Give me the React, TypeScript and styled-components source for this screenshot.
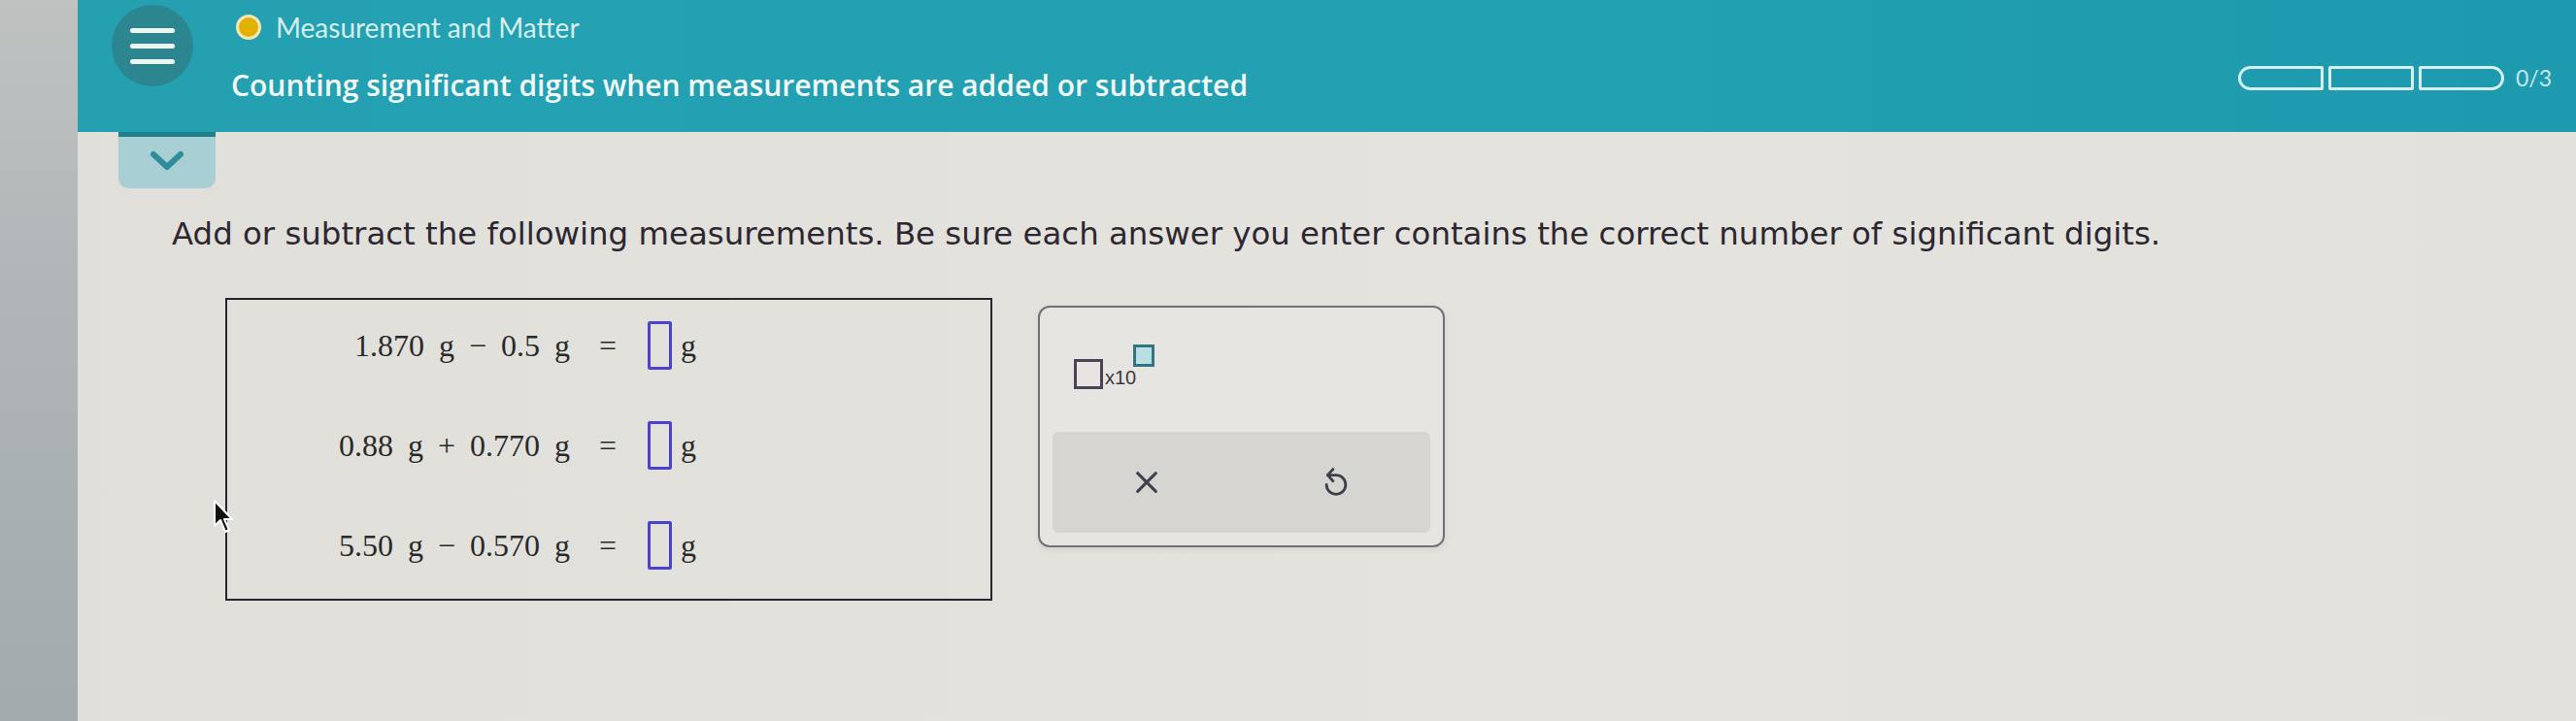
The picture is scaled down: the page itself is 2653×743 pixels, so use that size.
import React from "react";
import styled, { createGlobalStyle } from "styled-components";

const GlobalStyle = createGlobalStyle`
  html, body {
    margin: 0;
    padding: 0;
    background: #e2e1dc;
  }
  * { box-sizing: border-box; }
`;

const equations = [
  { expr: "1.870 g − 0.5 g" },
  { expr: "0.88 g + 0.770 g" },
  { expr: "5.50 g − 0.570 g" },
];

const App: React.FC = () => {
  return (
    <Page>
      <GlobalStyle />
      <LeftStrip />
      <Main>
        <Header>
          <MenuButton>
            <span />
            <span />
            <span />
          </MenuButton>
          <Titles>
            <Topic>
              <Dot />
              <span>Measurement and Matter</span>
            </Topic>
            <Lesson>Counting significant digits when measurements are added or subtracted</Lesson>
          </Titles>
          <Progress>
            <Segment $pos="first" />
            <Segment $pos="mid" />
            <Segment $pos="last" />
            <Score>0/3</Score>
          </Progress>
        </Header>

        <Tab>
          <svg width="36" height="22" viewBox="0 0 36 22">
            <polyline points="4,4 18,17 32,4" fill="none" stroke="#2f8d99" strokeWidth="6" strokeLinecap="round" strokeLinejoin="round" />
          </svg>
        </Tab>

        <Instruction>
          Add or subtract the following measurements. Be sure each answer you enter contains the correct number of significant digits.
        </Instruction>

        <Workspace>
          <EquationBox>
            {equations.map((e) => (
              <React.Fragment key={e.expr}>
                <Expr>{e.expr}</Expr>
                <Equals>=</Equals>
                <AnswerSlot />
                <Unit>g</Unit>
              </React.Fragment>
            ))}
          </EquationBox>

          <Keypad>
            <SciRow>
              <BaseBox />
              <Times10>x10</Times10>
              <ExpBox />
            </SciRow>
            <ActionBar>
              <ActionButton aria-label="clear">
                <svg width="28" height="28" viewBox="0 0 24 24">
                  <path d="M4 4 L20 20 M20 4 L4 20" stroke="#3c414c" strokeWidth="2.6" strokeLinecap="round" fill="none" />
                </svg>
              </ActionButton>
              <ActionButton aria-label="undo">
                <svg width="30" height="32" viewBox="0 0 24 26">
                  <path d="M9.5 2 L5 7 L9.5 12" stroke="#3c414c" strokeWidth="2.3" strokeLinecap="round" strokeLinejoin="round" fill="none" />
                  <path d="M5 7 H12 A8 8 0 1 1 4 15" stroke="#3c414c" strokeWidth="2.3" strokeLinecap="round" fill="none" />
                </svg>
              </ActionButton>
            </ActionBar>
          </Keypad>
        </Workspace>
      </Main>

      <Cursor width="24" height="38" viewBox="0 0 24 38">
        <path d="M2 2 L2 28 L8 22 L13 34 L17 32 L12 21 L20 21 Z" fill="#111" stroke="#fff" strokeWidth="2" strokeLinejoin="round" />
      </Cursor>
    </Page>
  );
};

const Page = styled.div`
  position: relative;
  display: flex;
  width: 2653px;
  height: 743px;
  overflow: hidden;
  background: #e2e1dc;
`;

const LeftStrip = styled.div`
  width: 80px;
  flex-shrink: 0;
  background: linear-gradient(180deg, #bfc2c1 0%, #b0b6b8 40%, #a2aaad 100%);
`;

const Main = styled.div`
  flex: 1;
  display: flex;
  flex-direction: column;
  background: linear-gradient(90deg, #e0dfda 0%, #e4e3de 60%, #e2e1dc 100%);
`;

const Header = styled.header`
  height: 136px;
  display: flex;
  align-items: flex-start;
  padding-left: 35px;
  padding-right: 25px;
  background: linear-gradient(90deg, #24a0b1 0%, #22a1b3 60%, #1d9aad 100%);
  color: #eaf5f3;
`;

const MenuButton = styled.div`
  width: 84px;
  height: 84px;
  margin-top: 5px;
  border-radius: 50%;
  background: #2c8690;
  display: flex;
  flex-direction: column;
  align-items: center;
  justify-content: center;
  gap: 11px;
  span {
    display: block;
    width: 46px;
    height: 5px;
    border-radius: 3px;
    background: #eef6f2;
  }
`;

const Titles = styled.div`
  margin-left: 39px;
  padding-top: 11px;
  display: flex;
  flex-direction: column;
`;

const Topic = styled.div`
  display: flex;
  align-items: center;
  height: 34px;
  font-family: Lato, "Open Sans", sans-serif;
  font-size: 28px;
  color: #d6eeec;
  span {
    margin-left: 15px;
  }
`;

const Dot = styled.div`
  width: 26px;
  height: 26px;
  margin-left: 5px;
  border-radius: 50%;
  background: #e1b203;
  border: 3px solid #f2e7b4;
`;

const Lesson = styled.div`
  margin-top: 23px;
  font-family: "Open Sans", Lato, sans-serif;
  font-size: 30px;
  line-height: 40px;
  font-weight: 600;
  color: #f2f8f6;
`;

const Progress = styled.div`
  margin-left: auto;
  margin-top: 66px;
  display: flex;
  align-items: center;
  gap: 5px;
`;

const Segment = styled.div<{ $pos: "first" | "mid" | "last" }>`
  width: 88px;
  height: 25px;
  border: 3px solid #d6efee;
  border-radius: ${(p) =>
    p.$pos === "first" ? "13px 2px 2px 13px" : p.$pos === "last" ? "2px 13px 13px 2px" : "2px"};
`;

const Score = styled.span`
  margin-left: 7px;
  font-family: Lato, "Open Sans", sans-serif;
  font-size: 23px;
  color: #c7e6e7;
`;

const Tab = styled.div`
  margin-left: 42px;
  width: 100px;
  height: 58px;
  background: #a8cfd3;
  border-top: 5px solid #1f7f8b;
  border-radius: 0 0 10px 10px;
  display: flex;
  align-items: center;
  justify-content: center;
  padding-bottom: 4px;
`;

const Instruction = styled.p`
  margin: 27px 0 0 97px;
  font-family: "DejaVu Sans", Verdana, sans-serif;
  font-size: 32.4px;
  line-height: 40px;
  color: #2d2731;
  white-space: nowrap;
`;

const Workspace = styled.div`
  display: flex;
  align-items: flex-start;
  margin: 46px 0 0 152px;
`;

const EquationBox = styled.div`
  width: 790px;
  height: 312px;
  border: 2.5px solid #2a2230;
  padding-top: 22px;
  display: grid;
  grid-template-columns: 353px auto auto auto;
  grid-auto-rows: 50px;
  row-gap: 53px;
  align-items: center;
  justify-content: start;
  font-family: "Liberation Serif", "Times New Roman", serif;
  font-size: 32px;
  color: #2a2a2a;
`;

const Expr = styled.div`
  justify-self: end;
  white-space: pre;
  word-spacing: 7px;
`;

const Equals = styled.div`
  margin: 0 32px 0 30px;
`;

const AnswerSlot = styled.div`
  width: 25px;
  height: 50px;
  border: 3px solid #4b43cf;
  border-radius: 2px;
`;

const Unit = styled.div`
  margin-left: 9px;
`;

const Keypad = styled.div`
  margin: 8px 0 0 47px;
  width: 419px;
  height: 249px;
  border: 2.5px solid #717176;
  border-radius: 12px;
  background: #e6e5e1;
  display: flex;
  flex-direction: column;
  justify-content: space-between;
  padding: 38px 13px 13px;
  box-shadow: 0 2px 6px rgba(0, 0, 0, 0.08);
`;

const SciRow = styled.div`
  display: flex;
  align-items: flex-end;
  height: 46px;
  margin-left: 22px;
`;

const BaseBox = styled.div`
  width: 30px;
  height: 31px;
  border: 3px solid #4d4256;
`;

const Times10 = styled.span`
  margin-left: 2px;
  font-family: "Liberation Sans", Arial, sans-serif;
  font-size: 20px;
  line-height: 1;
  padding-bottom: 2px;
  color: #3c3a40;
`;

const ExpBox = styled.div`
  align-self: flex-start;
  margin-left: -3px;
  width: 22px;
  height: 23px;
  border: 3px solid #2f7585;
  background: #b9dfe3;
`;

const ActionBar = styled.div`
  height: 104px;
  border-radius: 6px;
  background: #d6d5d2;
  display: flex;
`;

const ActionButton = styled.div`
  flex: 1;
  display: flex;
  align-items: center;
  justify-content: center;
`;

const Cursor = styled.svg`
  position: absolute;
  left: 219px;
  top: 514px;
`;

export default App;
